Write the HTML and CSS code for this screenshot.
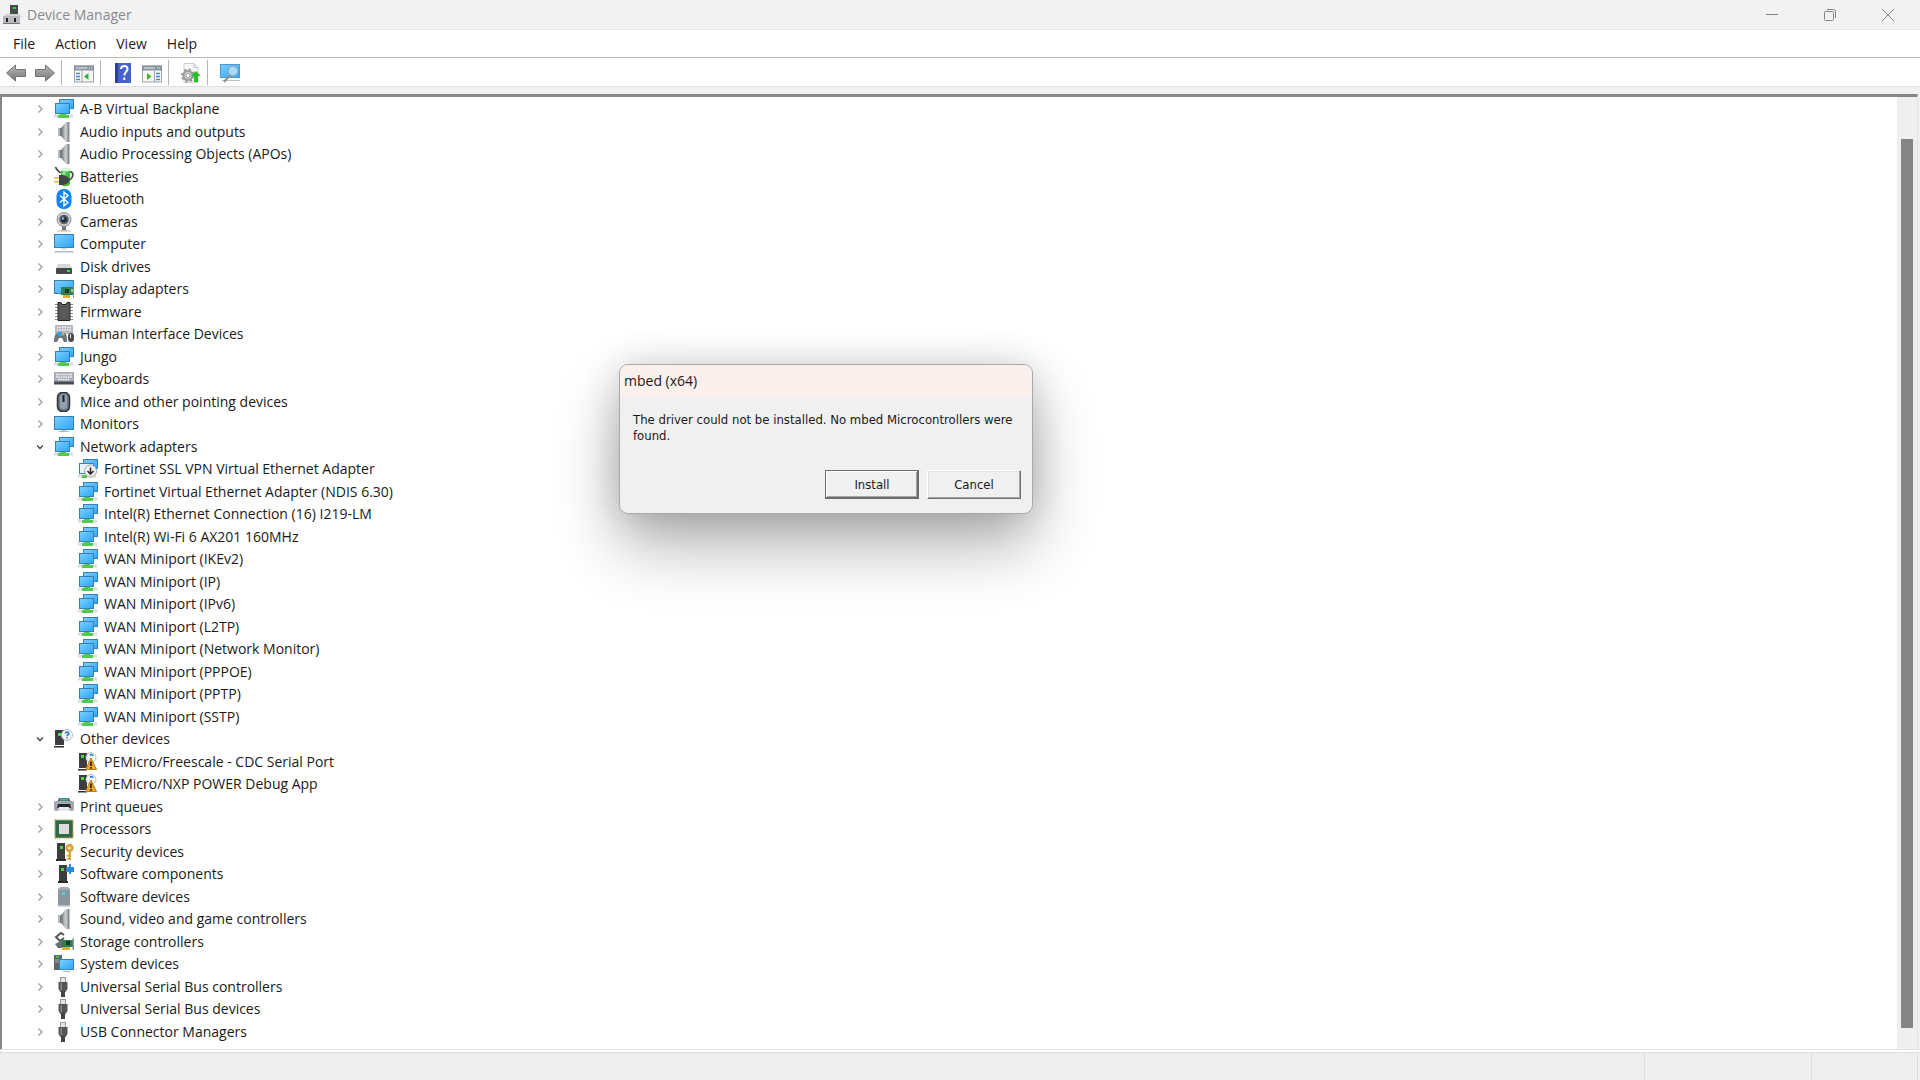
FILE: index.html
```html
<!DOCTYPE html>
<html lang="en">
  <head>
    <meta charset="utf-8" />
    <title>Device Manager</title>
    <link rel="stylesheet" href="styles.css">
  </head>
  <body>
    <!-- Icon sprite -->
    <svg class="sprite" aria-hidden="true">
      <defs>
        <linearGradient id="blue" x1="0" y1="0" x2="1" y2="1">
          <stop offset="0" stop-color="#7dcfff" />
          <stop offset="1" stop-color="#2ba6fa" />
        </linearGradient>
        <linearGradient id="metal" x1="0" y1="0" x2="1" y2="0">
          <stop offset="0" stop-color="#6c7075" />
          <stop offset="0.6" stop-color="#cfd2d5" />
          <stop offset="1" stop-color="#84888d" />
        </linearGradient>
        <linearGradient id="arrow" x1="0" y1="0" x2="0" y2="1">
          <stop offset="0" stop-color="#b9b9b9" />
          <stop offset="1" stop-color="#777" />
        </linearGradient>
      </defs>

      <symbol id="i-app" viewBox="0 0 20 20">
        <rect x="8" y="0" width="8" height="10" fill="#4a4a4c" />
        <rect x="11" y="2" width="3" height="2" fill="#35d33a" />
        <path d="M3 9h15l1 3H2z" fill="#d3d3d6" />
        <rect x="1" y="11" width="17" height="8" fill="#bbb8bd" />
        <rect x="1" y="18" width="17" height="1" fill="#77747a" />
        <rect x="4" y="13" width="2" height="4" fill="#222" />
        <rect x="12" y="13" width="2" height="4" fill="#222" />
      </symbol>

      <symbol id="i-network" viewBox="0 0 20 20">
        <rect x="5.500" y=".5" width="14" height="9" fill="url(#blue)" stroke="#3b80ad" />
        <rect x="0" y="15.500" width="19" height="3" fill="#dcdcdc" />
        <rect x="1.500" y="4.500" width="14" height="10" fill="url(#blue)" stroke="#3b80ad" />
        <path d="M6 15h6v1h3v3H4v-3h2z" fill="#52c94f" />
      </symbol>

      <symbol id="i-network-off" viewBox="0 0 20 20">
        <rect x="5.500" y=".5" width="14" height="9" fill="url(#blue)" stroke="#3b80ad" />
        <rect x="0" y="15.500" width="18" height="3" fill="#dcdcdc" />
        <rect x="1.500" y="4.500" width="14" height="10" fill="#e3f3fd" stroke="#3b80ad" />
        <path d="M4 16h5v3H4z" fill="#52c94f" />
        <circle cx="12.500" cy="12" r="6" fill="#f0f0f0" stroke="#a6a6a6" />
        <path d="M12.500 8.500V15M9.500 12l3 3 3-3" fill="none" stroke="#2c2c2c" stroke-width="1.600" />
      </symbol>

      <symbol id="i-speaker" viewBox="0 0 20 20">
        <path d="M4 6h5v8H4z" fill="#777c82" />
        <path d="M4 6h2v8H4z" fill="#b4b8bc" />
        <path d="M7 6l5-6h3v20h-3l-5-6z" fill="url(#metal)" />
        <path d="M14 0h1.500v20H14z" fill="#85898e" />
      </symbol>

      <symbol id="i-battery" viewBox="0 0 20 20">
        <rect x="7" y="1" width="9" height="18" rx="3" fill="#3fbf38" />
        <ellipse cx="11.500" cy="2.500" rx="4.500" ry="2" fill="#dff1dd" />
        <rect x="8.500" y="5" width="3" height="4" fill="#93e58c" />
        <path d="M1.500 0c1 3 3 4 5 6M16 5c4-1 4 7-2 8" fill="none" stroke="#4a4a4a" stroke-width="1.800" />
        <path d="M5 8h5l4 2 2 3-2 3-4 2H5z" fill="#454545" />
        <path d="M0 10h5v1.600H0zM0 14h5v1.600H0z" fill="#e7b92c" />
      </symbol>

      <symbol id="i-bluetooth" viewBox="0 0 20 20">
        <rect x="2.500" y="0" width="15" height="20" rx="7" fill="#0a84f6" />
        <path d="M6 6.500l8 7-4 3.500V3l4 3.500-8 7" fill="none" stroke="#fff" stroke-width="1.400" />
      </symbol>

      <symbol id="i-camera" viewBox="0 0 20 20">
        <path d="M8 14h4v4H8z" fill="#77797c" />
        <path d="M3 19.500c1-2 13-2 14 0z" fill="#b7b9bc" />
        <circle cx="10" cy="7.500" r="7" fill="#d0d1d3" stroke="#8b8d90" />
        <circle cx="10" cy="7.500" r="4.800" fill="#5c6167" />
        <circle cx="10" cy="7.500" r="2.800" fill="#1b2a3b" />
        <circle cx="9" cy="6.500" r="1.300" fill="#84b6dd" />
      </symbol>

      <symbol id="i-computer" viewBox="0 0 20 20">
        <rect x="0.500" y="0.500" width="19" height="13" fill="url(#blue)" stroke="#3b80ad" />
        <path d="M7 14h6v2H7z" fill="#e0e5e9" />
        <path d="M1 17h18l1 1.500H0z" fill="#a7bdcc" />
      </symbol>

      <symbol id="i-monitor" viewBox="0 0 20 20">
        <rect x="0.500" y="2.500" width="19" height="13" fill="url(#blue)" stroke="#3b80ad" />
        <path d="M8 16h4v1h3v1H5v-1h3z" fill="#b4bdc4" />
      </symbol>

      <symbol id="i-disk" viewBox="0 0 20 20">
        <path d="M4 7h12l2 4H2z" fill="#d6d7d8" />
        <rect x="2" y="11" width="16" height="6" rx="1" fill="#454749" />
        <rect x="13" y="13" width="3" height="2" fill="#3fdc3f" />
      </symbol>

      <symbol id="i-display" viewBox="0 0 20 20">
        <rect x="0.500" y="1.500" width="19" height="13" fill="url(#blue)" stroke="#3b80ad" />
        <rect x="7" y="8" width="13" height="8" fill="#2e8050" />
        <rect x="11" y="10" width="4" height="4" fill="#173c28" />
        <path d="M17 10h2v3h-2z" fill="#8dc79f" />
        <rect x="9" y="16" width="7" height="3" fill="#f0a81e" />
        <rect x="19" y="7" width="1" height="12" fill="#909090" />
      </symbol>

      <symbol id="i-firmware" viewBox="0 0 20 20">
        <path d="M1 2.500h18M1 5.500h18M1 8.500h18M1 11.500h18M1 14.500h18M1 17.500h18" stroke="#8c8c8c" />
        <path d="M4 .5h3l1 2h4l1-2h3v18H4z" fill="#58585a" stroke="#262626" />
      </symbol>

      <symbol id="i-hid" viewBox="0 0 20 20">
        <rect x="1" y="1" width="18" height="9" fill="#b5bac0" />
        <path d="M3 3.500h14M3 6h14" stroke="#f2f2f2" stroke-width="1.300" stroke-dasharray="1.500 1" />
        <path d="M0 18c0-5 1-9 4-9h6c3 0 3 5 3 9h-3l-2-4H5l-2 4z" fill="#6f747b" />
        <rect x="14" y="9" width="6" height="9" rx="3" fill="#4a4e55" />
        <path d="M16.500 10v4" stroke="#ddd" />
        <circle cx="6" cy="10" r="2.500" fill="#2fa4ef" />
        <circle cx="9" cy="10" r="1.500" fill="#ef9e35" />
      </symbol>

      <symbol id="i-keyboard" viewBox="0 0 20 20">
        <rect x="0" y="3" width="20" height="12" fill="#a8acb3" />
        <rect x="0" y="12.500" width="20" height="3" fill="#474b52" />
        <path d="M2 5.500h16M2 8h16M4 10.500h12" stroke="#f3f3f3" stroke-width="1.500" stroke-dasharray="1.600 .8" />
      </symbol>

      <symbol id="i-mouse" viewBox="0 0 20 20">
        <rect x="3.500" y="0.500" width="12" height="19" rx="5" fill="#6d7886" stroke="#2f3236" stroke-width="1.500" />
        <rect x="6" y="2" width="7" height="15" rx="3" fill="#93a0ae" />
        <rect x="8.500" y="3" width="2" height="7" fill="#222" />
      </symbol>

      <symbol id="i-unknown" viewBox="0 0 20 20">
        <path d="M1 1h9v15H1z" fill="#3d3d3f" />
        <path d="M0 17h10v1.500H0z" fill="#2b2b2d" />
        <rect x="4" y="4" width="3" height="3" fill="#3fe03f" />
        <circle cx="13" cy="6" r="5.500" fill="#f4f6f8" stroke="#bcc0c4" />
        <path d="M11.500 4.500c0-2 3.500-2 3.300 0 0 1.200-1.700 1.200-1.700 2.700M13.100 8.200v1.400" fill="none" stroke="#1c76cf" stroke-width="1.500" />
      </symbol>

      <symbol id="i-warning" viewBox="0 0 20 20">
        <path d="M1 1h8v15H1z" fill="#3d3d3f" />
        <path d="M0 17h9v1.500H0z" fill="#2b2b2d" />
        <rect x="3" y="3" width="3" height="3" fill="#3fe03f" />
        <circle cx="13" cy="5.500" r="5" fill="#f4f6f8" stroke="#bcc0c4" />
        <path d="M12 3.500c1-1.500 3-1 3 .5" fill="none" stroke="#1c76cf" stroke-width="1.500" />
        <path d="M13 6l5.500 11.500h-11z" fill="#eea720" stroke="#b87d16" />
        <path d="M13 9.500v4.500M13 15v1.700" stroke="#222" stroke-width="1.700" />
      </symbol>

      <symbol id="i-printer" viewBox="0 0 20 20">
        <path d="M5 1h10l2 4H3z" fill="#5d646b" />
        <rect x="6" y="1.500" width="8" height="2" fill="#35b99b" />
        <rect x="0" y="4" width="20" height="10" rx="2" fill="#a1a8af" />
        <path d="M4 7h12l1 4H3z" fill="#24272a" />
        <path d="M5 10h10l1 4H4z" fill="#e6e9eb" />
        <rect x="16" y="5" width="2" height="1" fill="#3fe03f" />
      </symbol>

      <symbol id="i-cpu" viewBox="0 0 20 20">
        <rect x="1" y="1" width="18" height="18" fill="#2d6b4c" stroke="#c4a955" stroke-width="1.500" stroke-dasharray="1.300 1" />
        <rect x="2" y="2" width="16" height="16" fill="#2d6b4c" />
        <rect x="5" y="5" width="10" height="10" fill="#dcdcdc" />
      </symbol>

      <symbol id="i-security" viewBox="0 0 20 20">
        <path d="M3 1h8v16H3z" fill="#3d3d3f" />
        <path d="M2 17h10v2H2z" fill="#2b2b2d" />
        <rect x="6" y="4" width="3" height="3" fill="#3fe03f" />
        <circle cx="15.500" cy="6" r="2.700" fill="none" stroke="#dba33b" stroke-width="3" />
        <path d="M14.500 10h2.500v8h-2.500zM12.500 13h3v1.500h-3zM12.500 16h3v1.500h-3z" fill="#dba33b" />
      </symbol>

      <symbol id="i-component" viewBox="0 0 20 20">
        <path d="M5 1h8v16H5z" fill="#3d3d3f" />
        <path d="M4 17h10v2H4z" fill="#2b2b2d" />
        <rect x="7" y="4" width="3" height="3" fill="#3fe03f" />
        <path d="M12 3h3V0h2v3h3v5h-3v2h-2V8h-3z" fill="#2b8bdd" />
      </symbol>

      <symbol id="i-software" viewBox="0 0 20 20">
        <path d="M6 0h8l2 2v17H4V2z" fill="#a4adb5" />
        <path d="M4 3h12v15H4z" fill="#8b969f" />
        <path d="M4 18h12v1.500H4z" fill="#b5bdc4" />
        <rect x="8" y="5" width="3" height="3" fill="#47d6e8" />
      </symbol>

      <symbol id="i-storage" viewBox="0 0 20 20">
        <path d="M10 3L7 1 2 5l4 4 4-3" fill="none" stroke="#505356" stroke-width="2" />
        <path d="M1 12l6-3 9 3-6 4H4z" fill="#6a6d70" />
        <rect x="8" y="8" width="12" height="7" fill="#2e8050" />
        <rect x="12" y="9" width="4" height="4" fill="#173c28" />
        <rect x="8" y="15" width="8" height="3" fill="#f0a81e" />
        <rect x="18.500" y="6" width="1.500" height="12" fill="#909090" />
      </symbol>

      <symbol id="i-system" viewBox="0 0 20 20">
        <rect x="0" y="1" width="8" height="15" fill="#5d656b" />
        <rect x="2" y="2" width="3" height="1.500" fill="#3fe03f" />
        <path d="M1 6h5M1 8h5" stroke="#aaa" />
        <rect x="5.500" y="5.500" width="14" height="10" fill="url(#blue)" stroke="#3b80ad" />
        <path d="M9 17h7v1H9z" fill="#a7b2ba" />
      </symbol>

      <symbol id="i-usb" viewBox="0 0 20 20">
        <rect x="6.500" y="0.500" width="5" height="5" fill="#e4e4e4" stroke="#9a9a9a" />
        <path d="M4.500 5h9v7l-2 3h-5l-2-3z" fill="#555557" />
        <rect x="7" y="14" width="4" height="6" fill="#444446" />
        <path d="M6.500 6H8v7H6.500z" fill="#8a8a8c" />
      </symbol>

      <symbol id="i-back" viewBox="0 0 20 20">
        <path d="M.5 10l9-8v4.500h10v7h-10V18z" fill="url(#arrow)" stroke="#757575" stroke-linejoin="round" />
      </symbol>
      <symbol id="i-forward" viewBox="0 0 20 20">
        <path d="M19.500 10l-9-8v4.500H.5v7h10V18z" fill="url(#arrow)" stroke="#757575" stroke-linejoin="round" />
      </symbol>

      <symbol id="i-tree-pane" viewBox="0 0 20 20">
        <rect x="0.500" y="3" width="19" height="16" fill="#f7f7f7" stroke="#9aa2ab" />
        <rect x="0" y="2.500" width="20" height="5" fill="#8b949e" />
        <path d="M2 5h11M15 5h1M17 5h1" stroke="#e8ecf0" />
        <path d="M8 8v11" stroke="#9aa2ab" />
        <path d="M2 10.500h4M2 13.500h4M2 16.500h4" stroke="#4a86c8" stroke-width="1.500" />
        <path d="M14.500 10v7L10 13.500z" fill="#37b52b" />
      </symbol>
      <symbol id="i-action-pane" viewBox="0 0 20 20">
        <rect x="0.500" y="3" width="19" height="16" fill="#f7f7f7" stroke="#9aa2ab" />
        <rect x="0" y="2.500" width="20" height="5" fill="#8b949e" />
        <path d="M2 5h11M15 5h1M17 5h1" stroke="#e8ecf0" />
        <path d="M12.500 8v11" stroke="#9aa2ab" />
        <path d="M14 10.500h4M14 13.500h4M14 16.500h4" stroke="#4a86c8" stroke-width="1.500" />
        <path d="M5 10v7l4.500-3.500z" fill="#37b52b" />
      </symbol>
      <symbol id="i-help" viewBox="0 0 20 20">
        <rect x="2" y="0" width="16" height="20" fill="#4562cf" />
        <rect x="2" y="0" width="3" height="20" fill="#2a3e9c" />
        <path d="M8 6c0-4 7-4 6.500 0 0 3-3.200 3-3.200 6.500M11.300 14.500v2.500" fill="none" stroke="#fff" stroke-width="2" />
      </symbol>
      <symbol id="i-update" viewBox="0 0 20 20">
        <path d="M3 .5h10l4 4v15H3z" fill="#f6f6f6" stroke="#d0d0d0" />
        <path d="M13 .5v4h4" fill="none" stroke="#c2c2c2" />
        <circle cx="7" cy="12.500" r="4.500" fill="#d5d5d5" stroke="#9a9a9a" stroke-width="2" />
        <circle cx="7" cy="12.500" r="6" fill="none" stroke="#9a9a9a" stroke-width="2" stroke-dasharray="2.350 2.350" />
        <circle cx="7" cy="12.500" r="2" fill="#fff" stroke="#9a9a9a" />
        <path d="M15 8l5 5h-3v6h-4v-6h-3z" fill="#25c225" />
      </symbol>
      <symbol id="i-scan" viewBox="0 0 20 20">
        <rect x="0.500" y="1.500" width="19" height="13" fill="url(#blue)" stroke="#4b9bd0" />
        <path d="M2 17h18v1H2z" fill="#b9c3ca" />
        <path d="M10 12l-6 7" stroke="#8e8e8e" stroke-width="2" />
        <circle cx="13" cy="8" r="5" fill="#a5dbfb" stroke="#8ba9bd" stroke-width="1.500" />
      </symbol>

      <symbol id="i-right" viewBox="0 0 8 8">
        <path d="M2.500 .5L6 4 2.500 7.500" fill="none" stroke="#9a9a9a" stroke-width="1.200" />
      </symbol>
      <symbol id="i-down" viewBox="0 0 8 8">
        <path d="M1 2.500l3 3 3-3" fill="none" stroke="#404040" stroke-width="1.300" />
      </symbol>
    </svg>

    <div class="window">
      <header class="title-bar">
        <svg class="icon"><use href="#i-app" /></svg>
        <h1>Device Manager</h1>
        <div class="window-controls">
          <button aria-label="Minimize"><svg viewBox="0 0 12 12"><path d="M0 5.500h12" /></svg></button>
          <button aria-label="Restore"><svg viewBox="0 0 12 12"><rect x=".5" y="2.500" width="9" height="9" rx="1" /><path d="M3 .5h6.500a2 2 0 0 1 2 2V9" /></svg></button>
          <button aria-label="Close"><svg viewBox="0 0 12 12"><path d="M0 0l12 12M12 0L0 12" /></svg></button>
        </div>
      </header>

      <nav class="menu-bar">
        <button>File</button>
        <button>Action</button>
        <button>View</button>
        <button>Help</button>
      </nav>

      <div class="toolbar">
        <button aria-label="Back"><svg class="icon"><use href="#i-back" /></svg></button>
        <button aria-label="Forward"><svg class="icon"><use href="#i-forward" /></svg></button>
        <span class="separator"></span>
        <button aria-label="Show console tree"><svg class="icon"><use href="#i-tree-pane" /></svg></button>
        <span class="separator"></span>
        <button aria-label="Help topics"><svg class="icon"><use href="#i-help" /></svg></button>
        <button aria-label="Show action pane"><svg class="icon"><use href="#i-action-pane" /></svg></button>
        <span class="separator"></span>
        <button aria-label="Update driver"><svg class="icon"><use href="#i-update" /></svg></button>
        <span class="separator"></span>
        <button aria-label="Scan for hardware changes"><svg class="icon"><use href="#i-scan" /></svg></button>
      </div>

      <main class="panel">
        <ul class="tree" role="tree">
          <li role="treeitem"><svg class="chevron"><use href="#i-right" /></svg><svg class="icon"><use href="#i-network" /></svg><span>A-B Virtual Backplane</span></li>
          <li role="treeitem"><svg class="chevron"><use href="#i-right" /></svg><svg class="icon"><use href="#i-speaker" /></svg><span>Audio inputs and outputs</span></li>
          <li role="treeitem"><svg class="chevron"><use href="#i-right" /></svg><svg class="icon"><use href="#i-speaker" /></svg><span>Audio Processing Objects (APOs)</span></li>
          <li role="treeitem"><svg class="chevron"><use href="#i-right" /></svg><svg class="icon"><use href="#i-battery" /></svg><span>Batteries</span></li>
          <li role="treeitem"><svg class="chevron"><use href="#i-right" /></svg><svg class="icon"><use href="#i-bluetooth" /></svg><span>Bluetooth</span></li>
          <li role="treeitem"><svg class="chevron"><use href="#i-right" /></svg><svg class="icon"><use href="#i-camera" /></svg><span>Cameras</span></li>
          <li role="treeitem"><svg class="chevron"><use href="#i-right" /></svg><svg class="icon"><use href="#i-computer" /></svg><span>Computer</span></li>
          <li role="treeitem"><svg class="chevron"><use href="#i-right" /></svg><svg class="icon"><use href="#i-disk" /></svg><span>Disk drives</span></li>
          <li role="treeitem"><svg class="chevron"><use href="#i-right" /></svg><svg class="icon"><use href="#i-display" /></svg><span>Display adapters</span></li>
          <li role="treeitem"><svg class="chevron"><use href="#i-right" /></svg><svg class="icon"><use href="#i-firmware" /></svg><span>Firmware</span></li>
          <li role="treeitem"><svg class="chevron"><use href="#i-right" /></svg><svg class="icon"><use href="#i-hid" /></svg><span>Human Interface Devices</span></li>
          <li role="treeitem"><svg class="chevron"><use href="#i-right" /></svg><svg class="icon"><use href="#i-network" /></svg><span>Jungo</span></li>
          <li role="treeitem"><svg class="chevron"><use href="#i-right" /></svg><svg class="icon"><use href="#i-keyboard" /></svg><span>Keyboards</span></li>
          <li role="treeitem"><svg class="chevron"><use href="#i-right" /></svg><svg class="icon"><use href="#i-mouse" /></svg><span>Mice and other pointing devices</span></li>
          <li role="treeitem"><svg class="chevron"><use href="#i-right" /></svg><svg class="icon"><use href="#i-monitor" /></svg><span>Monitors</span></li>
          <li role="treeitem" aria-expanded="true"><svg class="chevron"><use href="#i-down" /></svg><svg class="icon"><use href="#i-network" /></svg><span>Network adapters</span></li>
          <li class="child" role="treeitem" aria-level="2"><svg class="icon"><use href="#i-network-off" /></svg><span>Fortinet SSL VPN Virtual Ethernet Adapter</span></li>
          <li class="child" role="treeitem" aria-level="2"><svg class="icon"><use href="#i-network" /></svg><span>Fortinet Virtual Ethernet Adapter (NDIS 6.30)</span></li>
          <li class="child" role="treeitem" aria-level="2"><svg class="icon"><use href="#i-network" /></svg><span>Intel(R) Ethernet Connection (16) I219-LM</span></li>
          <li class="child" role="treeitem" aria-level="2"><svg class="icon"><use href="#i-network" /></svg><span>Intel(R) Wi-Fi 6 AX201 160MHz</span></li>
          <li class="child" role="treeitem" aria-level="2"><svg class="icon"><use href="#i-network" /></svg><span>WAN Miniport (IKEv2)</span></li>
          <li class="child" role="treeitem" aria-level="2"><svg class="icon"><use href="#i-network" /></svg><span>WAN Miniport (IP)</span></li>
          <li class="child" role="treeitem" aria-level="2"><svg class="icon"><use href="#i-network" /></svg><span>WAN Miniport (IPv6)</span></li>
          <li class="child" role="treeitem" aria-level="2"><svg class="icon"><use href="#i-network" /></svg><span>WAN Miniport (L2TP)</span></li>
          <li class="child" role="treeitem" aria-level="2"><svg class="icon"><use href="#i-network" /></svg><span>WAN Miniport (Network Monitor)</span></li>
          <li class="child" role="treeitem" aria-level="2"><svg class="icon"><use href="#i-network" /></svg><span>WAN Miniport (PPPOE)</span></li>
          <li class="child" role="treeitem" aria-level="2"><svg class="icon"><use href="#i-network" /></svg><span>WAN Miniport (PPTP)</span></li>
          <li class="child" role="treeitem" aria-level="2"><svg class="icon"><use href="#i-network" /></svg><span>WAN Miniport (SSTP)</span></li>
          <li role="treeitem" aria-expanded="true"><svg class="chevron"><use href="#i-down" /></svg><svg class="icon"><use href="#i-unknown" /></svg><span>Other devices</span></li>
          <li class="child" role="treeitem" aria-level="2"><svg class="icon"><use href="#i-warning" /></svg><span>PEMicro/Freescale - CDC Serial Port</span></li>
          <li class="child" role="treeitem" aria-level="2"><svg class="icon"><use href="#i-warning" /></svg><span>PEMicro/NXP POWER Debug App</span></li>
          <li role="treeitem"><svg class="chevron"><use href="#i-right" /></svg><svg class="icon"><use href="#i-printer" /></svg><span>Print queues</span></li>
          <li role="treeitem"><svg class="chevron"><use href="#i-right" /></svg><svg class="icon"><use href="#i-cpu" /></svg><span>Processors</span></li>
          <li role="treeitem"><svg class="chevron"><use href="#i-right" /></svg><svg class="icon"><use href="#i-security" /></svg><span>Security devices</span></li>
          <li role="treeitem"><svg class="chevron"><use href="#i-right" /></svg><svg class="icon"><use href="#i-component" /></svg><span>Software components</span></li>
          <li role="treeitem"><svg class="chevron"><use href="#i-right" /></svg><svg class="icon"><use href="#i-software" /></svg><span>Software devices</span></li>
          <li role="treeitem"><svg class="chevron"><use href="#i-right" /></svg><svg class="icon"><use href="#i-speaker" /></svg><span>Sound, video and game controllers</span></li>
          <li role="treeitem"><svg class="chevron"><use href="#i-right" /></svg><svg class="icon"><use href="#i-storage" /></svg><span>Storage controllers</span></li>
          <li role="treeitem"><svg class="chevron"><use href="#i-right" /></svg><svg class="icon"><use href="#i-system" /></svg><span>System devices</span></li>
          <li role="treeitem"><svg class="chevron"><use href="#i-right" /></svg><svg class="icon"><use href="#i-usb" /></svg><span>Universal Serial Bus controllers</span></li>
          <li role="treeitem"><svg class="chevron"><use href="#i-right" /></svg><svg class="icon"><use href="#i-usb" /></svg><span>Universal Serial Bus devices</span></li>
          <li role="treeitem"><svg class="chevron"><use href="#i-right" /></svg><svg class="icon"><use href="#i-usb" /></svg><span>USB Connector Managers</span></li>
        </ul>
        <div class="scrollbar"><div class="thumb"></div></div>
      </main>

      <footer class="status-bar">
        <span class="status-main"></span>
        <span class="status-cell"></span>
        <span class="status-cell status-end"></span>
      </footer>
    </div>

    <div class="dialog" role="dialog" aria-labelledby="dialog-title">
      <h2 id="dialog-title">mbed (x64)</h2>
      <div class="dialog-body">
        <p>The driver could not be installed. No mbed Microcontrollers were found.</p>
        <div class="dialog-buttons">
          <button class="default">Install</button>
          <button>Cancel</button>
        </div>
      </div>
    </div>
  </body>
</html>
```

FILE: styles.css
```css
* {
  margin: 0;
  padding: 0;
  box-sizing: border-box;
}

body {
  font-family: "Open Sans", "Noto Sans", sans-serif;
  font-size: 14px;
  line-height: 20px;
  color: #1a1a1a;
  background: #f0f0f0;
}

button {
  font: inherit;
  color: inherit;
  background: none;
  border: none;
}

.sprite {
  position: absolute;
  width: 0;
  height: 0;
}

.icon {
  display: block;
  width: 20px;
  height: 20px;
  flex: none;
}

.window {
  display: flex;
  flex-direction: column;
  min-height: 100vh;
}

/* Title bar */
.title-bar {
  display: flex;
  align-items: center;
  height: 30px;
  padding: 0 3px 0 2px;
  background: #f2f2f2;
  border-bottom: 1px solid #e6e6e6;
}

.title-bar h1 {
  margin-left: 5px;
  font-size: 14px;
  font-weight: 400;
  color: #8a8a8a;
}

.window-controls {
  display: flex;
  margin-left: auto;
}

.window-controls button {
  display: flex;
  align-items: center;
  justify-content: center;
  width: 58px;
  height: 28px;
}

.window-controls svg {
  width: 12px;
  height: 12px;
  fill: none;
  stroke: #858585;
  overflow: visible;
}

/* Menu and toolbar */
.menu-bar {
  display: flex;
  height: 28px;
  padding: 0 3px;
  background: #fff;
  border-bottom: 1px solid #bcbcbf;
}

.menu-bar button {
  padding: 0 10px;
}

.toolbar {
  display: flex;
  align-items: center;
  height: 29px;
  padding: 1px 6px 0;
  background: #fff;
  border-bottom: 1px solid #dedede;
}

.toolbar button + button {
  margin-left: 9px;
}

.separator {
  width: 1px;
  height: 25px;
  margin: 0 12px 0 6px;
  background: #b4b4b4;
}

/* Device tree */
.panel {
  display: flex;
  flex: 1;
  margin-top: 7px;
  margin-right: 2px;
  background: #fff;
  border-top: 3px solid #868686;
  border-left: 2px solid #868686;
  border-right: 1px solid #e3e3e3;
}

.tree {
  display: flex;
  flex: 1;
  flex-direction: column;
  padding: 1px 0 6px 34px;
  list-style: none;
}

.tree li {
  display: flex;
  flex: 1;
  align-items: center;
  white-space: nowrap;
}

.tree span {
  margin-left: 6px;
}

.chevron {
  width: 8px;
  height: 8px;
  margin-right: 10px;
}

.tree .child {
  padding-left: 42px;
}

.scrollbar {
  display: flex;
  width: 20px;
  padding: 42px 4px 21px;
  background: #efefef;
}

.thumb {
  flex: 1;
  background: #858585;
}

/* Status bar */
.status-bar {
  display: flex;
  height: 31px;
  padding: 2px 2px 0 0;
  background: linear-gradient(#e4e4e4 1px, #fff 1px, #fff 3px, #ddd 3px, #ddd 4px, #efefef 4px);
}

.status-bar span {
  margin-top: 3px;
  border-right: 1px solid #dcdcdc;
}

.status-main {
  flex: 1;
}

.status-cell {
  width: 167px;
}

.status-end {
  width: 106px;
}

/* Message box */
.dialog {
  position: absolute;
  top: 364px;
  left: 619px;
  width: 414px;
  background: #f0f0f0;
  border: 1px solid #a8a8a8;
  border-radius: 9px;
  box-shadow: 0 32px 64px rgba(0, 0, 0, 0.3), 0 2px 36px rgba(0, 0, 0, 0.16);
  color: #1a1a1a;
  overflow: hidden;
}

.dialog h2 {
  height: 32px;
  padding-left: 4px;
  background: #faf0ed;
  font-size: 14px;
  font-weight: 400;
  line-height: 32px;
}

.dialog-body {
  padding: 15px 11px 14px 13px;
  font-family: "DejaVu Sans Condensed", "DejaVu Sans", sans-serif;
  font-size: 13px;
  line-height: 16px;
}

.dialog-buttons {
  display: flex;
  justify-content: flex-end;
  gap: 8px;
  margin-top: 26px;
}

.dialog-buttons button {
  width: 94px;
  height: 29px;
  border: 1px solid;
  border-color: #fff #707070 #707070 #fff;
  box-shadow: inset -1px -1px #a6a6a6, inset 1px 1px #e3e3e3;
}

.dialog-buttons .default {
  border-color: #6c6c6c;
  box-shadow: inset -1px -1px #6c6c6c, inset 1px 1px #fff, inset -2px -2px #a6a6a6;
}
```
